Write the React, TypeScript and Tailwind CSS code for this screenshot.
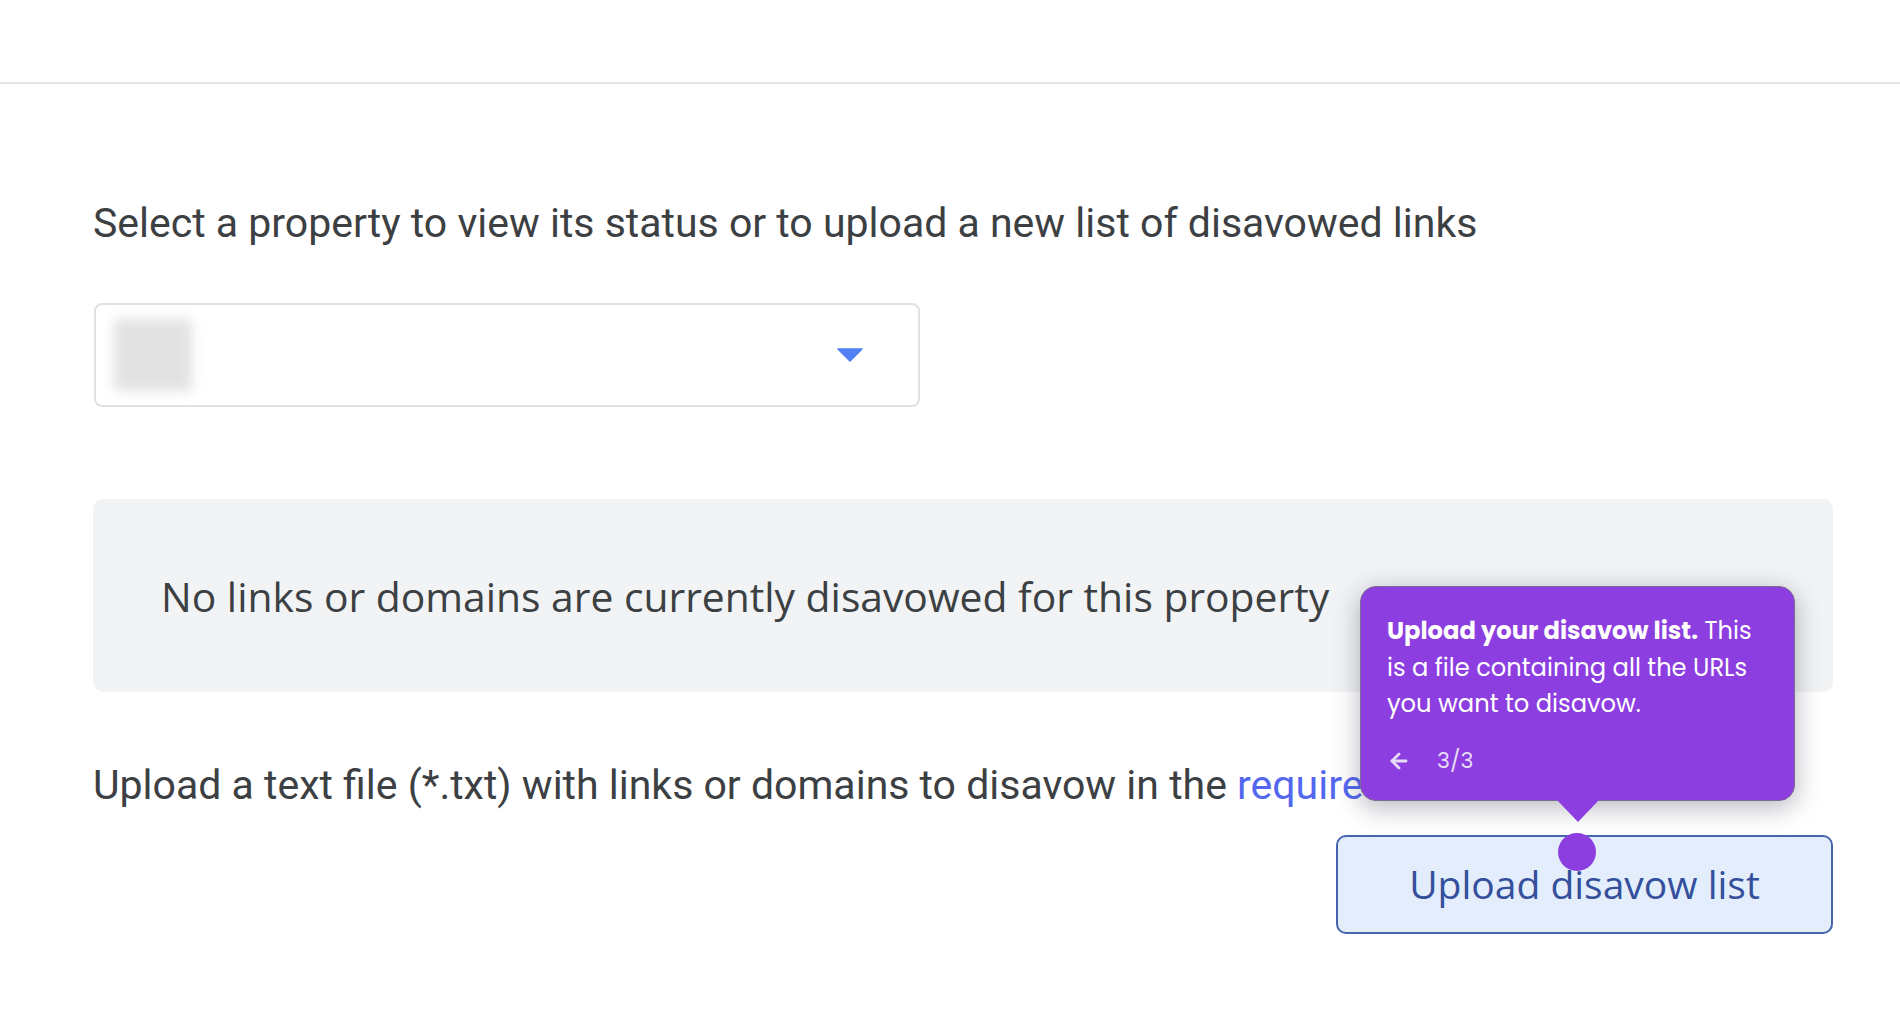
import { ArrowLeft } from "lucide-react";

const roboto = "font-['Roboto','Liberation_Sans',sans-serif]";
const gsans = "font-['Open_Sans','Noto_Sans',sans-serif]";
const poppins = "font-['Poppins','Inter','Noto_Sans',sans-serif]";

function PropertySelect() {
  return (
    <div className="mt-[58px] ml-[1px] flex h-[104px] w-[826px] items-center justify-between rounded-[8px] border-2 border-[#dfe1e5] bg-white pl-[18px] pr-[55px]">
      <div className="h-[72px] w-[78px] rounded-[4px] bg-[#e2e2e2] blur-[6px]" />
      <svg width="26" height="14" viewBox="0 0 26 14">
        <polygon points="1,1 25,1 13,13" fill="#5080f2" stroke="#5080f2" strokeWidth="1.5" strokeLinejoin="round" />
      </svg>
    </div>
  );
}

function Tooltip() {
  return (
    <div className={`absolute left-[24px] top-[-249px] w-[435px] rounded-[16px] border border-[#7c6a90] bg-[#8c3ee0] pl-[26px] pr-[10px] pt-[26px] pb-[21px] text-white shadow-[0_6px_26px_rgba(40,40,70,0.35)] ${poppins}`}>
      <p className="whitespace-nowrap text-[24.2px] leading-[36.5px]">
        <span className="font-bold">Upload your disavow list.</span> This
        <br />
        is a file containing all the URLs
        <br />
        you want to disavow.
      </p>
      <div className="mt-[20px] flex items-center gap-[26px] text-[22px] leading-[36.5px] text-[#e6dcf6]">
        <ArrowLeft size={24} strokeWidth={2.8} />
        <span>3/3</span>
      </div>
      {/* pointer */}
      <div className="absolute left-[196px] top-full h-0 w-0 border-x-[21px] border-t-[22px] border-x-transparent border-t-[#8c3ee0]" />
    </div>
  );
}

export default function App() {
  return (
    <div className="min-h-screen bg-white">
      <div className="h-[84px] border-b-2 border-[#e3e5e8]" />

      <main className="flex flex-col pl-[93px] pr-[67px]">
        <h1 className={`mt-[117px] text-[41px] leading-[44px] text-[#3c4043] ${roboto}`}>
          Select a property to view its status or to upload a new list of disavowed links
        </h1>

        <PropertySelect />

        <div className="mt-[92px] flex h-[193px] items-center rounded-[10px] bg-[#f1f3f4] pl-[68px]">
          <p className={`text-[40.8px] leading-[44px] text-[#3c4043] ${gsans}`}>
            No links or domains are currently disavowed for this property
          </p>
        </div>

        <p className={`mt-[71px] text-[41px] leading-[44px] text-[#3c4043] ${roboto}`}>
          Upload a text file (*.txt) with links or domains to disavow in the{" "}
          <span className="text-[#5468ef]">required format</span>.
        </p>

        <div className="relative mt-[28px] self-end">
          <button
            className={`flex h-[99px] w-[497px] items-center justify-center rounded-[10px] border-2 border-[#4565ad] bg-[#e3edfb] text-[39px] text-[#34509c] ${gsans}`}
          >
            Upload disavow list
          </button>
          <Tooltip />
          <div className="absolute left-[222px] top-[-2px] h-[38px] w-[38px] rounded-full bg-[#8c3ee0]" />
        </div>
      </main>
    </div>
  );
}
